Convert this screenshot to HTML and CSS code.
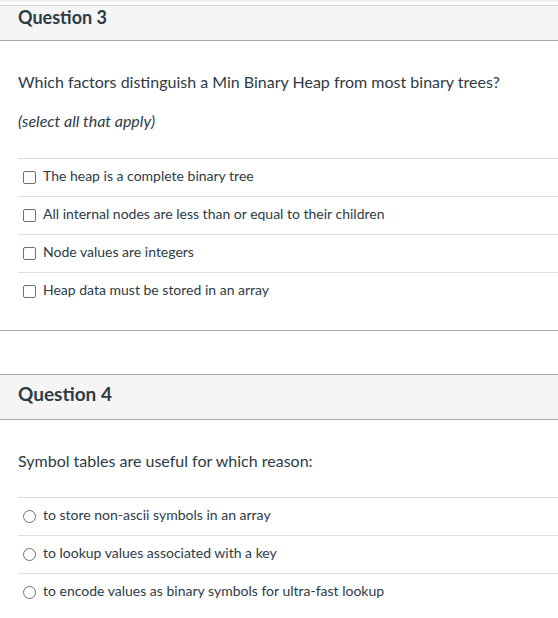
FILE: index.html
```html
<!DOCTYPE html>
<html lang="en">
<head>
<meta charset="utf-8">
<title>Quiz</title>
<link rel="stylesheet" href="styles.css">
</head>
<body>
<div class="top-strip"></div>
<section class="question question-first">
  <header class="q-header"><h2 class="q-title">Question 3</h2></header>
  <div class="q-body">
    <p class="q-text">Which factors distinguish a Min Binary Heap from most binary trees?</p>
    <p class="q-text"><em>(select all that apply)</em></p>
    <ul class="answers">
      <li class="answer"><span class="check"></span><span class="label">The heap is a complete binary tree</span></li>
      <li class="answer"><span class="check"></span><span class="label">All internal nodes are less than or equal to their children</span></li>
      <li class="answer"><span class="check"></span><span class="label">Node values are integers</span></li>
      <li class="answer"><span class="check"></span><span class="label">Heap data must be stored in an array</span></li>
    </ul>
  </div>
</section>
<section class="question">
  <header class="q-header"><h2 class="q-title q-title-lg">Question 4</h2></header>
  <div class="q-body">
    <p class="q-text">Symbol tables are useful for which reason:</p>
    <ul class="answers answers-tight">
      <li class="answer"><span class="radio"></span><span class="label">to store non-ascii symbols in an array</span></li>
      <li class="answer"><span class="radio"></span><span class="label">to lookup values associated with a key</span></li>
      <li class="answer"><span class="radio"></span><span class="label">to encode values as binary symbols for ultra-fast lookup</span></li>
    </ul>
  </div>
</section>
</body>
</html>
```

FILE: styles.css
```css
* { box-sizing: border-box; }
html, body { margin: 0; padding: 0; background: #fff; }
body {
  font-family: Lato, "Open Sans", "Liberation Sans", sans-serif;
  color: #2d3b45;
  overflow: hidden;
}
.top-strip {
  height: 5px;
  border-top: 2px solid #f0f0f0;
}
.question {
  border-bottom: 1px solid #a9a9a9;
  margin-bottom: 43px;
}
.q-header {
  background: #f5f5f5;
  border-top: 1px solid #a9a9a9;
  border-bottom: 1px solid #a9a9a9;
  padding: 8px 18px 14px;
}
.question-first .q-header {
  border-top-color: #dcdcdc;
  padding-top: 0;
  padding-bottom: 12px;
}
.q-title {
  margin: 0;
  font-size: 18px;
  line-height: 22px;
  font-weight: 700;
}
.q-title-lg { font-size: 19px; }
.q-body {
  padding: 29px 0 20px 18px;
}
.q-text {
  margin: 0 0 15px;
  font-size: 16px;
  line-height: 24px;
}
.q-text em { font-style: italic; }
.answers {
  list-style: none;
  margin: 25px 0 0;
  padding: 0;
}
.answers-tight { margin-top: 24px; }
.answer {
  height: 38px;
  border-top: 1px solid #dddddd;
  display: flex;
  align-items: center;
  gap: 7px;
  padding-left: 5px;
  padding-bottom: 4px;
  font-size: 14px;
  line-height: 20px;
}
.check {
  width: 13px;
  height: 13px;
  border: 1px solid #707070;
  border-radius: 2px;
  flex: none;
  margin-top: 3px;
}
.radio {
  width: 13px;
  height: 13px;
  border: 1px solid #707070;
  border-radius: 50%;
  flex: none;
  margin-top: 3px;
}
```
